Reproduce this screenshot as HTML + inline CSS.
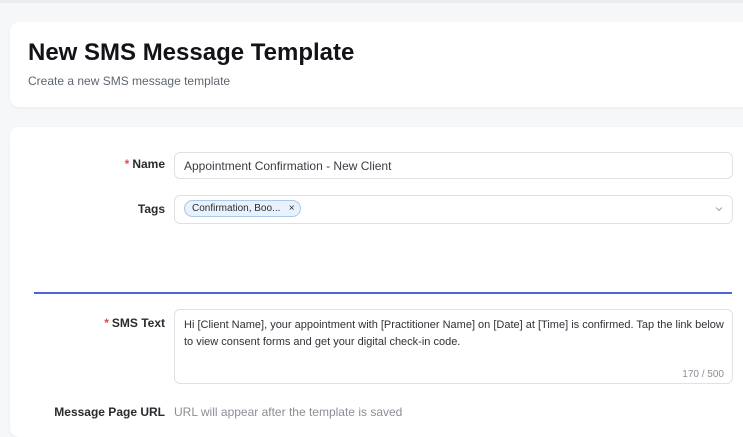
<!DOCTYPE html>
<html><head><style>
body{margin:0;width:743px;height:424px;overflow:hidden;background:#f5f7f9;font-family:"Liberation Sans",sans-serif;position:relative}
.top{position:absolute;left:0;top:0;width:743px;height:3px;background:#e9eef0}
.card{position:absolute;background:#fff;border-radius:9px;box-shadow:0 1px 3px rgba(0,0,0,.05)}
.lbl{position:absolute;right:578px;font-size:12px;font-weight:bold;color:#2a2a30}
.req{color:#e5484d;margin-right:3px}
.inp{position:absolute;left:174px;width:557px;border:1px solid #dfe1e6;border-radius:6px;background:#fff}
</style></head><body>
<div class="top"></div>
<div class="card" style="left:10px;top:22px;width:745px;height:85px">
<div style="position:absolute;left:18px;top:17px;font-size:24px;font-weight:bold;color:#111318;letter-spacing:0px">New SMS Message Template</div>
<div style="position:absolute;left:18px;top:52px;font-size:12px;color:#5f6670">Create a new SMS message template</div>
</div>
<div class="card" style="left:10px;top:127px;width:745px;height:310px"></div>
<div class="lbl" style="top:157px"><span class="req">*</span>Name</div>
<div class="inp" style="top:152px;height:25px"><span style="position:absolute;left:9px;top:6px;font-size:12px;color:#3a3d44">Appointment Confirmation - New Client</span></div>
<div class="lbl" style="top:202px">Tags</div>
<div class="inp" style="top:195px;height:27px">
<span style="position:absolute;left:9px;top:4px;height:17px;width:117px;border:1px solid #a9c8ee;background:#e8f1fc;border-radius:9px;font-size:10px;color:#2a2d33;line-height:16px;padding-left:7px;box-sizing:border-box">Confirmation, Boo...&nbsp;&nbsp;&nbsp;×</span>
<svg style="position:absolute;right:9px;top:10px" width="8" height="6" viewBox="0 0 8 6"><path d="M1 1.5L4 4.5L7 1.5" fill="none" stroke="#a0a4ab" stroke-width="1"/></svg></div>
<div style="position:absolute;left:34px;top:292px;width:698px;height:1.5px;background:#4b63e0"></div>
<div class="lbl" style="top:316px"><span class="req">*</span>SMS Text</div>
<div class="inp" style="top:309px;height:73px">
<div style="position:absolute;left:9px;top:7px;width:548px;font-size:11px;line-height:16.5px;color:#2f3238">Hi [Client Name], your appointment with [Practitioner Name] on [Date] at [Time] is confirmed. Tap the link below to view consent forms and get your digital check-in code.</div>
<span style="position:absolute;right:8px;bottom:3px;font-size:10px;color:#8a8f96">170 / 500</span></div>
<div class="lbl" style="top:405px">Message Page URL</div>
<div style="position:absolute;left:174px;top:405px;font-size:12px;color:#8a8f96">URL will appear after the template is saved</div>
</body></html>
